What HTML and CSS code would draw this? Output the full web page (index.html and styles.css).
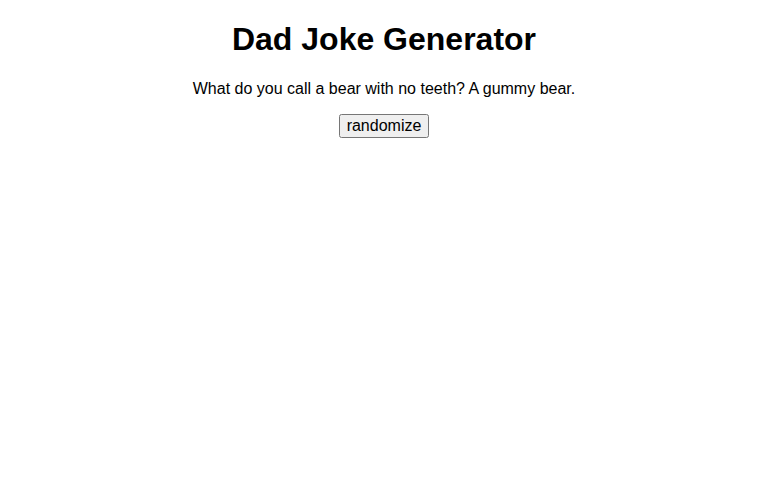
FILE: index.html
```html
<!DOCTYPE html>
<html lang="en">
<head>
  <meta charset="UTF-8" />
  <title>Dad Joke Generator</title>
  <link rel="stylesheet" href="styles.css">
</head>
<body>
  <div class="app">
    <h1>Dad Joke Generator</h1>
    <p id="joke">What do you call a bear with no teeth? A gummy bear.</p>
    <button id="randomize">randomize</button>
  </div>
</body>
</html>
```

FILE: styles.css
```css
body {
  margin: 0;
  font-family: "Liberation Sans", Arial, sans-serif;
  color: #000;
  background: #fff;
}

.app {
  text-align: center;
}

h1 {
  font-size: 2em;
}

button {
  font-family: "Liberation Sans", Arial, sans-serif;
  font-size: 16px;
}
```
